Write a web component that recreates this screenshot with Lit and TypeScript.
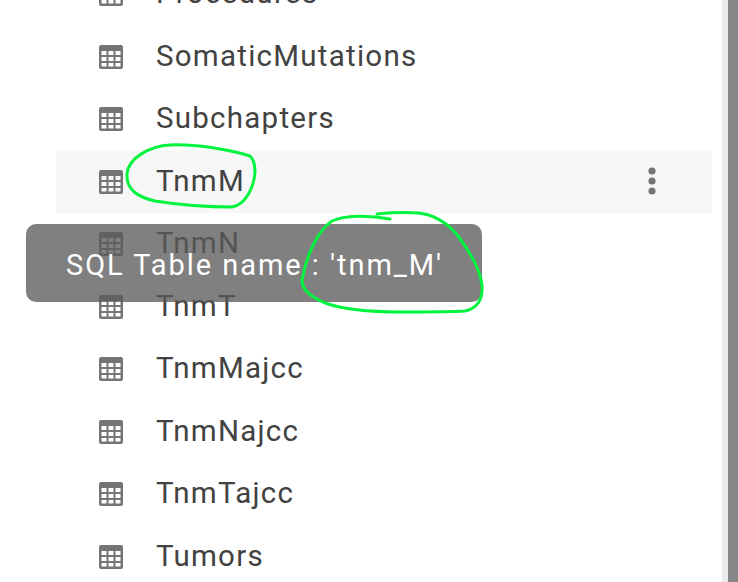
import { LitElement, html, css, svg } from "lit";
import { customElement } from "lit/decorators.js";

const NAMES = ["Procedures", "SomaticMutations", "Subchapters", "TnmM", "TnmN", "TnmT", "TnmMajcc", "TnmNajcc", "TnmTajcc", "Tumors"];

const tableIcon = html`<svg class="icon" viewBox="0 0 24 24"><path fill-rule="evenodd" d="M2 0H22A2 2 0 0 1 24 2V22A2 2 0 0 1 22 24H2A2 2 0 0 1 0 22V2A2 2 0 0 1 2 0ZM2.5 6V10H7.5V6ZM9.5 6V10H14.5V6ZM16.5 6V10H21.5V6ZM2.5 12V16H7.5V12ZM9.5 12V16H14.5V12ZM16.5 12V16H21.5V12ZM2.5 18V21.5H7.5V18ZM9.5 18V21.5H14.5V18ZM16.5 18V21.5H21.5V18Z"/></svg>`;

@customElement("app-root")
export class AppRoot extends LitElement {
  static styles = css`
    :host { display: block; position: relative; width: 738px; height: 582px; overflow: hidden; background: #fff; font-family: Roboto, "Liberation Sans", sans-serif; }
    .page { display: flex; height: 582px; }
    .list { width: 656px; margin: -37.5px 0 0 56px; flex: none; }
    .row { height: 62.5px; display: flex; align-items: center; padding: 0 56px 0 43px; box-sizing: border-box; font-size: 29.5px; letter-spacing: 1.25px; color: #424242; }
    .row.active { background: #f7f7f7; }
    .icon { width: 24px; height: 24px; fill: #757575; flex: none; margin: 1px 33px 0 0; }
    .label { flex: 1; margin-top: -1px; }
    .kebab { width: 8px; height: 30px; fill: #757575; flex: none; }
    .scroll { display: flex; margin-left: 10px; flex: none; }
    .track { width: 6px; background: #ebebeb; }
    .thumb { width: 10px; background: #888; }
    .tooltip { position: absolute; left: 26px; top: 224px; width: 456px; height: 78px; box-sizing: border-box; padding: 3px 40px 0; display: flex; align-items: center; border-radius: 10px; background: rgba(90, 90, 90, 0.77); color: #fff; font-size: 29px; letter-spacing: 1.95px; white-space: pre; }
    .ink { position: absolute; left: 0; top: 0; width: 738px; height: 582px; pointer-events: none; fill: none; stroke: #00f43e; stroke-width: 3; stroke-linecap: round; stroke-linejoin: round; }
  `;

  render() {
    return html`
      <div class="page">
        <div class="list">
          ${NAMES.map((n) => html`
            <div class="row ${n === "TnmM" ? "active" : ""}">
              ${tableIcon}
              <span class="label">${n}</span>
              ${n === "TnmM" ? html`<svg class="kebab" viewBox="0 0 8 30"><circle cx="4" cy="5" r="3.6"/><circle cx="4" cy="15" r="3.6"/><circle cx="4" cy="25" r="3.6"/></svg>` : ""}
            </div>`)}
        </div>
        <div class="scroll"><div class="track"></div><div class="thumb"></div></div>
      </div>
      <div class="tooltip">SQL Table name : 'tnm_M'</div>
      <svg class="ink" viewBox="0 0 738 582">
        ${svg`<path d="M250 156C228 149 195 144 170 145C150 146 128 158 127 174C126 190 138 197 155 201C180 205 210 207 232 207C245 205 254 188 255 172C255 165 254 160 250 156"/>`}
        ${svg`<path d="M390 219C368 215 345 215 332 221C316 232 306 258 302 280C302 291 312 297 325 303C345 310 375 312 400 312C425 312 450 312 465 311C478 308 483 298 482 285C480 268 470 252 458 236C447 222 432 214 418 213C404 212 388 213 377 214"/>`}
      </svg>
    `;
  }
}
